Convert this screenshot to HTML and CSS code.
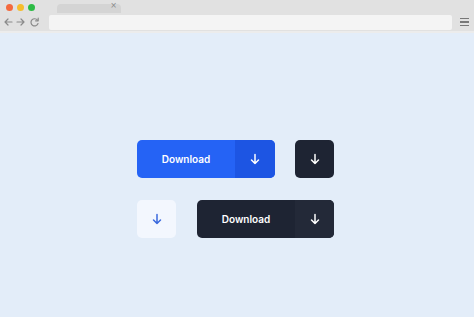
FILE: index.html
```html
<!DOCTYPE html>
<html lang="en">
  <head>
    <meta charset="UTF-8" />
    <meta name="viewport" content="width=device-width, initial-scale=1.0" />
    <title>Download Buttons</title>
    <link rel="stylesheet" href="styles.css">
  </head>
  <body>
    <div class="browser-bar">
      <div class="bar-top">
        <span class="dot red"></span>
        <span class="dot yellow"></span>
        <span class="dot green"></span>
        <div class="tab"><span class="tab-close">×</span></div>
      </div>
      <div class="bar-bottom">
        <div class="nav">
          <svg width="38" height="10" viewBox="0 0 38 10" fill="none" stroke="#8a8a8a" stroke-width="1.2" stroke-linecap="round" stroke-linejoin="round">
            <path d="M1 5h7M4 2L1 5l3 3" />
            <path d="M13 5h7M17 2l3 3-3 3" />
            <path d="M33.5 3.2A3.6 3.6 0 1 0 34 6.5" />
            <path d="M34.2 1.2v2.6h-2.6" />
          </svg>
        </div>
        <div class="address"></div>
        <div class="menu">
          <span></span><span></span><span></span>
        </div>
      </div>
    </div>

    <div class="page">
      <div class="button-row">
        <button class="split-btn blue">
          <span class="label">Download</span>
          <span class="icon-part">
            <svg class="arrow" viewBox="0 0 12 12"><path d="M6 1.5v9M2.5 7L6 10.5 9.5 7" /></svg>
          </span>
        </button>
        <button class="icon-btn dark">
          <svg class="arrow" viewBox="0 0 12 12"><path d="M6 1.5v9M2.5 7L6 10.5 9.5 7" /></svg>
        </button>
      </div>
      <div class="button-row">
        <button class="icon-btn light">
          <svg class="arrow" viewBox="0 0 12 12"><path d="M6 1.5v9M2.5 7L6 10.5 9.5 7" /></svg>
        </button>
        <button class="split-btn dark">
          <span class="label">Download</span>
          <span class="icon-part">
            <svg class="arrow" viewBox="0 0 12 12"><path d="M6 1.5v9M2.5 7L6 10.5 9.5 7" /></svg>
          </span>
        </button>
      </div>
    </div>
  </body>
</html>
```

FILE: styles.css
```css
* {
  box-sizing: border-box;
}
html, body {
  margin: 0;
  height: 100%;
}
body {
  font-family: Inter, "Noto Sans", sans-serif;
  background-color: #e3edf9;
  display: flex;
  flex-direction: column;
}
.browser-bar {
  background-color: #e1e1e1;
  height: 33px;
  border-bottom: 2px solid #ececec;
  flex-shrink: 0;
}
.bar-top {
  height: 13px;
  display: flex;
  align-items: center;
  padding-left: 6px;
  gap: 4px;
}
.dot {
  width: 7px;
  height: 7px;
  border-radius: 50%;
  margin-top: 1px;
}
.dot.red { background-color: #f4693d; }
.dot.yellow { background-color: #f6bd2d; }
.dot.green { background-color: #2cbb45; }
.tab {
  margin-left: 18px;
  align-self: flex-end;
  width: 64px;
  height: 9px;
  background-color: #d4d4d4;
  border-radius: 4px 4px 0 0;
  position: relative;
}
.tab-close {
  position: absolute;
  right: 4px;
  top: -3px;
  font-size: 8px;
  color: #8a8a8a;
  font-family: "DejaVu Sans", sans-serif;
}
.bar-bottom {
  height: 18px;
  display: flex;
  align-items: center;
}
.nav {
  width: 49px;
  padding-left: 4px;
  display: flex;
  align-items: center;
}
.address {
  width: 403px;
  height: 15px;
  background-color: #f4f4f4;
  border-radius: 2px;
}
.menu {
  margin-left: 8px;
  display: flex;
  flex-direction: column;
  gap: 2px;
}
.menu span {
  display: block;
  width: 9px;
  height: 1.5px;
  background-color: #777;
}
.page {
  flex: 1;
  padding: 107px 0 0 137px;
  display: flex;
  flex-direction: column;
  gap: 22px;
}
.button-row {
  display: flex;
  gap: 20px;
  height: 38px;
}
.button-row + .button-row {
  gap: 21px;
}
button {
  font-family: inherit;
  border: none;
  padding: 0;
  margin: 0;
  cursor: pointer;
  border-radius: 5px;
  overflow: hidden;
  height: 38px;
}
.arrow {
  width: 12px;
  height: 12px;
  fill: none;
  stroke: currentColor;
  stroke-width: 1.5;
  stroke-linecap: round;
  stroke-linejoin: round;
}
.split-btn {
  display: flex;
  color: #fff;
}
.split-btn .label {
  flex: 1;
  display: flex;
  align-items: center;
  justify-content: center;
  font-size: 10px;
  font-weight: 600;
}
.split-btn .icon-part {
  width: 39px;
  display: flex;
  align-items: center;
  justify-content: center;
}
.split-btn.blue {
  width: 138px;
  background-color: #2563f5;
}
.split-btn.blue .icon-part {
  width: 40px;
  background-color: #1d55e3;
}
.split-btn.dark {
  width: 137px;
  background-color: #1e2433;
}
.split-btn.dark .icon-part {
  background-color: #232938;
}
.icon-btn {
  width: 39px;
  display: flex;
  align-items: center;
  justify-content: center;
}
.icon-btn.dark {
  background-color: #1e2433;
  color: #fff;
}
.icon-btn.light {
  background-color: #f3f7fe;
  color: #3a68dd;
}
```
